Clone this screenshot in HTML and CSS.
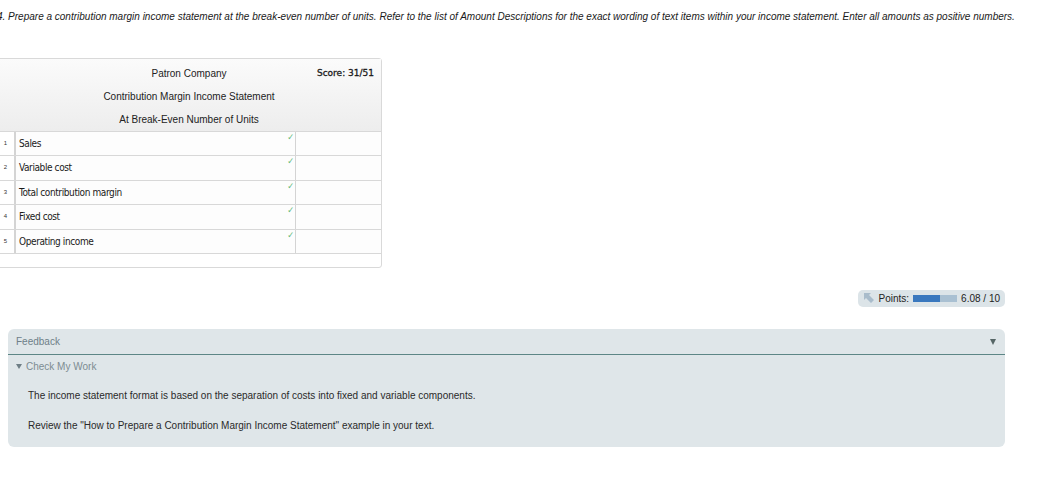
FILE: index.html
```html
<!DOCTYPE html>
<html>
<head>
<meta charset="utf-8">
<link rel="stylesheet" href="styles.css">
</head>
<body>
<div class="page">
  <p class="instruction">4. Prepare a contribution margin income statement at the break-even number of units. Refer to the list of Amount Descriptions for the exact wording of text items within your income statement. Enter all amounts as positive numbers.</p>

  <div class="sheet">
    <div class="sheet-head">
      <div class="title-line">Patron Company</div>
      <div class="title-line">Contribution Margin Income Statement</div>
      <div class="title-line">At Break-Even Number of Units</div>
      <div class="score">Score: 31/51</div>
    </div>
    <div class="row">
      <div class="num">1</div>
      <div class="label">Sales<span class="check">✓</span></div>
      <div class="amount"></div>
    </div>
    <div class="row">
      <div class="num">2</div>
      <div class="label">Variable cost<span class="check">✓</span></div>
      <div class="amount"></div>
    </div>
    <div class="row">
      <div class="num">3</div>
      <div class="label">Total contribution margin<span class="check">✓</span></div>
      <div class="amount"></div>
    </div>
    <div class="row">
      <div class="num">4</div>
      <div class="label">Fixed cost<span class="check">✓</span></div>
      <div class="amount"></div>
    </div>
    <div class="row">
      <div class="num">5</div>
      <div class="label">Operating income<span class="check">✓</span></div>
      <div class="amount"></div>
    </div>
    <div class="sheet-foot"></div>
  </div>

  <div class="lower">
    <div class="points-row">
      <div class="points">
        <svg class="points-icon" width="10" height="10" viewBox="0 0 10 10"><path d="M0 0 H7 L5 2 L10 7 L7 10 L2 5 L0 7 Z" fill="#a9bccb"/></svg>
        <span class="points-label">Points:</span>
        <span class="bar"><span class="bar-fill" style="width:60.8%"></span></span>
        <span class="points-value">6.08 / 10</span>
      </div>
    </div>

    <div class="feedback">
      <div class="fb-head">
        <span class="fb-title">Feedback</span>
        <span class="fb-toggle"></span>
      </div>
      <div class="fb-check"><span class="tri"></span>Check My Work</div>
      <div class="fb-body">
        <p class="fb-text">The income statement format is based on the separation of costs into fixed and variable components.</p>
        <p class="fb-text">Review the "How to Prepare a Contribution Margin Income Statement" example in your text.</p>
      </div>
    </div>
  </div>
</div>
</body>
</html>
```

FILE: styles.css
```css
html, body {
  margin: 0;
  padding: 0;
  background: #ffffff;
}

.page {
  font-family: "Liberation Sans", Arial, sans-serif;
  color: #222;
}

.instruction {
  margin: 11px 0 0 -3px;
  font-size: 10px;
  line-height: 12px;
  font-style: italic;
  color: #1a1a1a;
  white-space: nowrap;
}

.sheet {
  margin: 35px 0 0 -4px;
  width: 384px;
  border: 1px solid #d9d9d9;
  border-radius: 3px;
  background: #fff;
}

.sheet-head {
  position: relative;
  background: linear-gradient(#fbfbfb, #ededed);
  border-bottom: 1px solid #d8d8d8;
  padding-top: 3px;
}

.title-line {
  height: 23px;
  line-height: 23px;
  font-size: 10px;
  text-align: center;
  color: #222;
}

.score {
  position: absolute;
  top: 9px;
  right: 7px;
  font-family: "DejaVu Sans", Verdana, sans-serif;
  font-size: 9px;
  line-height: 11px;
  color: #1a1a1a;
  white-space: nowrap;
  -webkit-text-stroke: 0.3px #1a1a1a;
}

.row {
  display: flex;
  height: 23.4px;
  border-bottom: 1px solid #d8d8d8;
}

.num {
  width: 17px;
  border-right: 2px solid #d4d4d4;
  font-size: 6px;
  color: #333;
  text-align: center;
  line-height: 23.4px;
}

.label {
  position: relative;
  width: 276px;
  padding-left: 3px;
  border-right: 1px solid #d4d4d4;
  font-family: "DejaVu Sans Condensed", "Liberation Sans Narrow", sans-serif;
  font-stretch: condensed;
  font-size: 10px;
  letter-spacing: -0.4px;
  line-height: 23.4px;
  color: #1a1a1a;
  background: #fdfdfd;
}

.check {
  position: absolute;
  right: 1px;
  top: -6px;
  font-family: "DejaVu Sans", sans-serif;
  font-size: 9px;
  letter-spacing: 0;
  color: #5fb978;
}

.amount {
  flex: 1;
  background: #fdfdfd;
}

.sheet-foot {
  height: 13px;
}

.lower {
  margin: 22px 0 0 8px;
  width: 997px;
}

.points-row {
  display: flex;
  justify-content: flex-end;
}

.points {
  display: flex;
  align-items: center;
  height: 17px;
  padding: 0 5px 0 6px;
  background: #dce4e8;
  border-radius: 5px;
  font-size: 10px;
  color: #222;
}

.points-icon {
  margin-right: 5px;
}

.points-label {
  margin-right: 4px;
}

.bar {
  display: block;
  width: 44px;
  height: 7px;
  background: #a9c0d2;
}

.bar-fill {
  display: block;
  height: 100%;
  background: #3a78be;
}

.points-value {
  margin-left: 4px;
}

.feedback {
  margin-top: 22px;
  background: #dfe6e9;
  border-radius: 6px;
  padding-bottom: 15px;
}

.fb-head {
  display: flex;
  justify-content: space-between;
  align-items: center;
  height: 25.5px;
  padding: 0 8px;
  border-bottom: 1.5px solid #5d8686;
}

.fb-title {
  font-size: 10px;
  color: #6e8088;
}

.fb-toggle {
  width: 0;
  height: 0;
  border-left: 3.5px solid transparent;
  border-right: 3.5px solid transparent;
  border-top: 6px solid #566666;
  margin-right: 1px;
}

.fb-check {
  display: flex;
  align-items: center;
  height: 22px;
  padding-left: 8px;
  font-size: 10px;
  color: #7d8c92;
}

.tri {
  width: 0;
  height: 0;
  border-left: 3px solid transparent;
  border-right: 3px solid transparent;
  border-top: 5px solid #6f7f86;
  margin-right: 4px;
}

.fb-body {
  display: flex;
  flex-direction: column;
  gap: 18px;
  padding: 13px 0 0 20px;
}

.fb-text {
  margin: 0;
  font-size: 10px;
  line-height: 12px;
  color: #2a2a2a;
}
```
